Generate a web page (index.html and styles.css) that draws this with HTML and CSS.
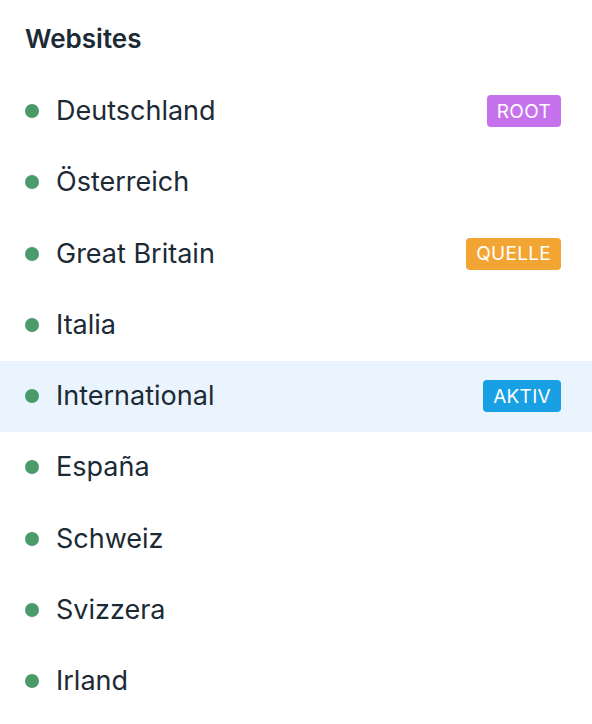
FILE: index.html
```html
<!DOCTYPE html>
<html lang="de">
<head>
<meta charset="utf-8">
<title>Websites</title>
<link rel="stylesheet" href="styles.css">
</head>
<body>
<div class="panel">
  <h2 class="title">Websites</h2>
  <ul class="list">
    <li class="row"><span class="dot"></span><span class="name">Deutschland</span><span class="badge badge-root">ROOT</span></li>
    <li class="row"><span class="dot"></span><span class="name">Österreich</span></li>
    <li class="row"><span class="dot"></span><span class="name">Great Britain</span><span class="badge badge-source">QUELLE</span></li>
    <li class="row"><span class="dot"></span><span class="name">Italia</span></li>
    <li class="row row-active"><span class="dot"></span><span class="name">International</span><span class="badge badge-active">AKTIV</span></li>
    <li class="row"><span class="dot"></span><span class="name">España</span></li>
    <li class="row"><span class="dot"></span><span class="name">Schweiz</span></li>
    <li class="row"><span class="dot"></span><span class="name">Svizzera</span></li>
    <li class="row"><span class="dot"></span><span class="name">Irland</span></li>
  </ul>
</div>
</body>
</html>
```

FILE: styles.css
```css
html, body {
  margin: 0;
  padding: 0;
  background: #ffffff;
}
body {
  font-family: Inter, "Noto Sans", "Liberation Sans", sans-serif;
  color: #1c2a35;
}
.panel {
  width: 592px;
}
.title {
  margin: 0;
  padding: 21px 25px 0;
  height: 75.5px;
  box-sizing: border-box;
  font-size: 26px;
  line-height: 36px;
  font-weight: 600;
  color: #1c2a35;
}
.list {
  list-style: none;
  margin: 0;
  padding: 0;
}
.row {
  display: flex;
  align-items: center;
  height: 71.25px;
  padding: 0 31px 0 25px;
  box-sizing: border-box;
}
.row-active {
  background: #eaf4fe;
}
.dot {
  width: 14px;
  height: 14px;
  border-radius: 50%;
  background: #4a9b6a;
  flex: none;
}
.name {
  margin-left: 17px;
  flex: 1;
  font-size: 27px;
  line-height: 36px;
  color: #1c2a35;
}
.badge {
  flex: none;
  height: 32px;
  padding: 0 10px;
  border-radius: 4px;
  display: flex;
  align-items: center;
  font-size: 19px;
  font-weight: 400;
  color: #ffffff;
  letter-spacing: 0.3px;
}
.badge-root {
  background: #c572ec;
}
.badge-source {
  background: #f3a534;
}
.badge-active {
  background: #199fe4;
}
```
